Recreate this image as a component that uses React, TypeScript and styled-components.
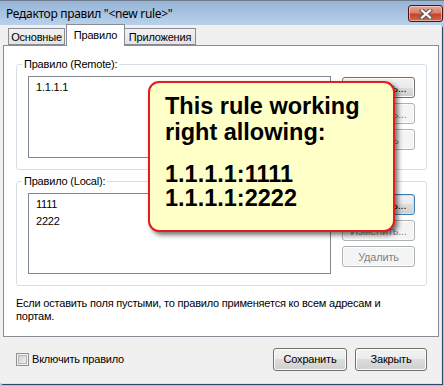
import React from "react";
import styled, { createGlobalStyle } from "styled-components";

const GlobalStyle = createGlobalStyle`
  html, body {
    margin: 0;
    padding: 0;
    background: #ffffff;
  }
  body {
    font-family: "Liberation Sans", Arial, sans-serif;
    font-size: 11px;
    letter-spacing: -0.2px;
    color: #000;
  }
`;

const Window = styled.div`
  position: relative;
  width: 444px;
  height: 386px;
  box-sizing: border-box;
  padding: 0 3px 3px 0;
  display: flex;
  flex-direction: column;
  background: #a9c5e3;
  overflow: hidden;
`;

const TitleBar = styled.div`
  height: 25px;
  margin-right: -3px;
  box-sizing: border-box;
  border-top: 1px solid #6f7c8c;
  background: linear-gradient(#96b4d6, #b9d1ea);
  display: flex;
  align-items: flex-start;
  justify-content: space-between;
  padding-left: 6px;
`;

const Title = styled.span`
  font-family: "Noto Sans", "DejaVu Sans", sans-serif;
  font-size: 12px;
  letter-spacing: -0.3px;
  line-height: 25px;
  color: #000;
`;

const CloseButton = styled.div`
  width: 35px;
  height: 17px;
  margin: 4px 1px 0 0;
  box-sizing: border-box;
  border: 1px solid #4a1414;
  border-radius: 3px;
  background: linear-gradient(#e7a597 0%, #d8806c 45%, #c4432c 55%, #cf6a4e 100%);
  box-shadow: inset 0 0 0 1px rgba(255, 220, 210, 0.6);
  display: flex;
  align-items: center;
  justify-content: center;
`;

const Client = styled.div`
  flex: 1;
  display: flex;
  flex-direction: column;
  background: #f0f0f0;
  box-shadow: 1px 1px 0 #dde4ec, 2px 2px 0 #2d4a6c;
`;

const TabsRow = styled.div`
  height: 20px;
  display: flex;
  align-items: flex-end;
  padding-left: 9px;
`;

const Tab = styled.div<{ $w: number; $active?: boolean }>`
  width: ${(p) => p.$w}px;
  height: ${(p) => (p.$active ? 22 : 17)}px;
  box-sizing: border-box;
  border: 1px solid #898c95;
  border-bottom: ${(p) => (p.$active ? "none" : "1px solid #898c95")};
  margin-bottom: ${(p) => (p.$active ? -1 : 0)}px;
  margin-left: ${(p) => (p.$active ? 1 : -1)}px;
  background: ${(p) => (p.$active ? "#ffffff" : "linear-gradient(#f2f2f2, #e3e3e3)")};
  position: relative;
  z-index: ${(p) => (p.$active ? 2 : 1)};
  display: flex;
  align-items: center;
  justify-content: center;
  padding-bottom: ${(p) => (p.$active ? 2 : 0)}px;
  white-space: nowrap;
`;

const Panel = styled.div`
  height: 292px;
  margin: 0 2px 0 3px;
  box-sizing: border-box;
  border: 1px solid #898c95;
  background: #ffffff;
  padding: 11px 11px 0 12px;
  display: flex;
  flex-direction: column;
`;

const Group = styled.fieldset<{ $gap?: number }>`
  margin: ${(p) => p.$gap ?? 0}px 0 0 0;
  padding: 5px 11px 11px 11px;
  border: 1px solid #d5dfe5;
  border-radius: 3px;
  min-inline-size: 0;
`;

const Legend = styled.legend`
  padding: 0 2px;
  margin-left: -6px;
  line-height: 14px;
`;

const Row = styled.div`
  display: flex;
  gap: 11px;
`;

const ListBox = styled.div<{ $h: number }>`
  flex: 1;
  height: ${(p) => p.$h}px;
  box-sizing: border-box;
  border: 1px solid #828790;
  background: #ffffff;
  padding: 2px 7px;
  line-height: 17px;
`;

const ButtonColumn = styled.div`
  width: 73px;
  margin-top: 1px;
  display: flex;
  flex-direction: column;
  gap: 5px;
`;

const Button = styled.button<{ $focus?: boolean; $w?: number; $h?: number }>`
  width: ${(p) => p.$w ?? 73}px;
  height: ${(p) => p.$h ?? 21}px;
  padding: 0;
  box-sizing: border-box;
  font-family: inherit;
  font-size: 11px;
  letter-spacing: inherit;
  color: #000;
  border: 1px solid ${(p) => (p.$focus ? "#3c7fb1" : "#707070")};
  border-radius: 3px;
  background: linear-gradient(#f2f2f2 0%, #ebebeb 50%, #dddddd 50%, #cfcfcf 100%);
  box-shadow: inset 0 0 0 1px ${(p) => (p.$focus ? "#c4e5f6" : "#fcfcfc")};

  &:disabled {
    color: #838383;
    border-color: #adb2b5;
    background: #f4f4f4;
    box-shadow: inset 0 0 0 1px #fcfcfc;
  }
`;

const Note = styled.div`
  margin-top: 11px;
  line-height: 13px;
`;

const BottomBar = styled.div`
  flex: 1;
  display: flex;
  align-items: center;
  justify-content: space-between;
  padding: 0 14px 2px 16px;
`;

const CheckLabel = styled.label`
  display: flex;
  align-items: center;
  gap: 3px;
`;

const CheckBox = styled.span`
  width: 13px;
  height: 13px;
  box-sizing: border-box;
  border: 1px solid #8e8f8f;
  box-shadow: inset 0 0 0 1px #f4f4f4, inset 0 0 0 2px #b5b5b5;
  background-image: linear-gradient(135deg, #cbcbcb, #f6f6f6);
`;

const Actions = styled.div`
  display: flex;
  gap: 8px;
`;

const Callout = styled.div`
  position: absolute;
  left: 148px;
  top: 81px;
  width: 247px;
  height: 151px;
  box-sizing: border-box;
  border: 2px solid #e51c1c;
  border-radius: 11px;
  background: #ffffc8;
  box-shadow: 3px 3px 5px rgba(0, 0, 0, 0.55);
  padding: 10px 10px 0 15px;
  font-family: "Liberation Sans", Arial, sans-serif;
  font-weight: bold;
  font-size: 23.5px;
  letter-spacing: 0;
  color: #000;
`;

const CalloutPara = styled.div<{ $lh: number; $gap?: number }>`
  line-height: ${(p) => p.$lh}px;
  margin-top: ${(p) => p.$gap ?? 0}px;
`;

const CloseGlyph = () => (
  <svg width="14" height="10" viewBox="0 0 14 10">
    <path d="M3 1.5 L11 8.5 M11 1.5 L3 8.5" stroke="#5a5a5a" strokeWidth="4.2" strokeLinecap="square" />
    <path d="M3 1.5 L11 8.5 M11 1.5 L3 8.5" stroke="#ffffff" strokeWidth="2.2" strokeLinecap="square" />
  </svg>
);

const RuleGroup = (props: { title: string; lines: string[]; h: number; gap?: number; focusFirst?: boolean }) => (
  <Group $gap={props.gap}>
    <Legend>{props.title}</Legend>
    <Row>
      <ListBox $h={props.h}>
        {props.lines.map((l) => (
          <div key={l}>{l}</div>
        ))}
      </ListBox>
      <ButtonColumn>
        <Button $focus={props.focusFirst}>Добавить...</Button>
        <Button disabled>Изменить...</Button>
        <Button disabled>Удалить</Button>
      </ButtonColumn>
    </Row>
  </Group>
);

const App = () => {
  return (
    <>
      <GlobalStyle />
      <Window>
        <TitleBar>
          <Title>Редактор правил "&lt;new rule&gt;"</Title>
          <CloseButton>
            <CloseGlyph />
          </CloseButton>
        </TitleBar>
        <Client>
          <TabsRow>
            <Tab $w={57}>Основные</Tab>
            <Tab $w={59} $active>Правило</Tab>
            <Tab $w={72}>Приложения</Tab>
          </TabsRow>
          <Panel>
            <RuleGroup title="Правило (Remote):" lines={["1.1.1.1"]} h={82} />
            <RuleGroup title="Правило (Local):" lines={["1111", "2222"]} h={81} gap={4} focusFirst />
            <Note>
              Если оставить поля пустыми, то правило применяется ко всем адресам и
              <br />
              портам.
            </Note>
          </Panel>
          <BottomBar>
            <CheckLabel>
              <CheckBox />
              Включить правило
            </CheckLabel>
            <Actions>
              <Button $w={74} $h={23}>Сохранить</Button>
              <Button $w={72} $h={23}>Закрыть</Button>
            </Actions>
          </BottomBar>
        </Client>
        <Callout>
          <CalloutPara $lh={26}>
            This rule working
            <br />
            right allowing:
          </CalloutPara>
          <CalloutPara $lh={24} $gap={17}>
            1.1.1.1:1111
            <br />
            1.1.1.1:2222
          </CalloutPara>
        </Callout>
      </Window>
    </>
  );
};

export default App;
